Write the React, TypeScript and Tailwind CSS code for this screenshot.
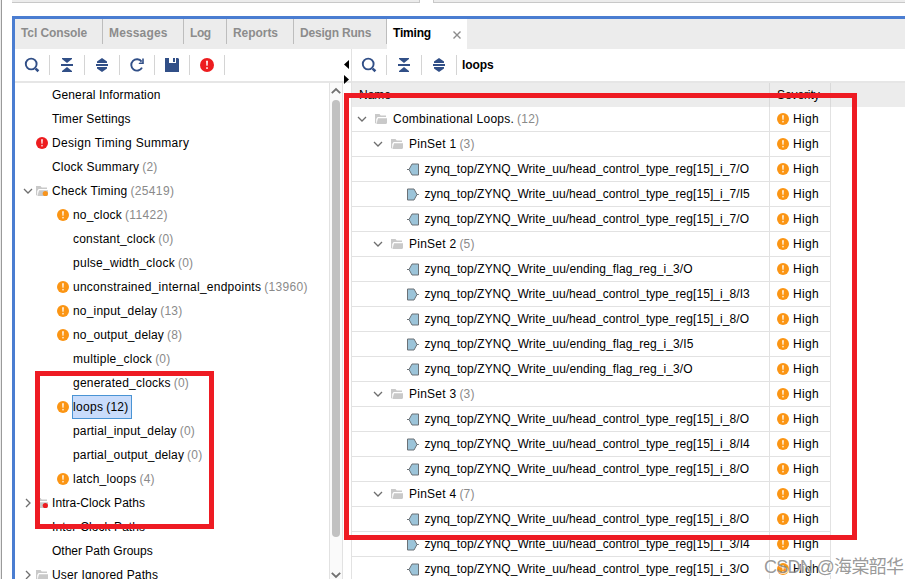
import clsx from 'clsx';

type Status = 'error' | 'warning';
type Folder = 'plain' | 'orange' | 'red';

interface TreeItem {
  name: string;
  count?: string;
  child?: boolean;
  status?: Status;
  folder?: Folder;
  arrow?: 'open' | 'closed';
  selected?: boolean;
  tracking: string;
}

interface LoopRow {
  name: string;
  count?: string;
  kind: 'root' | 'set' | 'out' | 'in';
}

const tabs = [
  { name: 'Tcl Console', style: 'w-[88px] tracking-[-0.1px]' },
  { name: 'Messages', style: 'w-[81px] tracking-[0.15px]' },
  { name: 'Log', style: 'w-[43px] tracking-[-0.4px]' },
  { name: 'Reports', style: 'w-[67px] tracking-[-0.05px]' },
  { name: 'Design Runs', style: 'w-[93px] tracking-[-0.2px]' },
];

const treeItems: TreeItem[] = [
  { name: 'General Information', tracking: 'tracking-[0.13px]' },
  { name: 'Timer Settings', tracking: 'tracking-[0.13px]' },
  { name: 'Design Timing Summary', status: 'error', tracking: 'tracking-[0.31px]' },
  { name: 'Clock Summary', count: '(2)', tracking: 'tracking-[0.2px]' },
  { name: 'Check Timing', count: '(25419)', folder: 'orange', arrow: 'open', tracking: 'tracking-[0.23px]' },
  { name: 'no_clock', count: '(11422)', child: true, status: 'warning', tracking: 'tracking-[0.2px]' },
  { name: 'constant_clock', count: '(0)', child: true, tracking: 'tracking-[0.2px]' },
  { name: 'pulse_width_clock', count: '(0)', child: true, tracking: 'tracking-[0.27px]' },
  { name: 'unconstrained_internal_endpoints', count: '(13960)', child: true, status: 'warning', tracking: 'tracking-[0.25px]' },
  { name: 'no_input_delay', count: '(13)', child: true, status: 'warning', tracking: 'tracking-[0.2px]' },
  { name: 'no_output_delay', count: '(8)', child: true, status: 'warning', tracking: 'tracking-[0.15px]' },
  { name: 'multiple_clock', count: '(0)', child: true, tracking: 'tracking-[0.27px]' },
  { name: 'generated_clocks', count: '(0)', child: true, tracking: 'tracking-[0.23px]' },
  { name: 'loops', count: '(12)', child: true, status: 'warning', selected: true, tracking: 'tracking-[0.3px]' },
  { name: 'partial_input_delay', count: '(0)', child: true, tracking: 'tracking-[0.16px]' },
  { name: 'partial_output_delay', count: '(0)', child: true, tracking: 'tracking-[0.15px]' },
  { name: 'latch_loops', count: '(4)', child: true, status: 'warning', tracking: 'tracking-[0.25px]' },
  { name: 'Intra-Clock Paths', folder: 'red', arrow: 'closed', tracking: 'tracking-[0.06px]' },
  { name: 'Inter-Clock Paths', tracking: 'tracking-[0.06px]' },
  { name: 'Other Path Groups', tracking: 'tracking-normal' },
  { name: 'User Ignored Paths', folder: 'plain', arrow: 'closed', tracking: 'tracking-[0.15px]' },
];

const headPin = 'zynq_top/ZYNQ_Write_uu/head_control_type_reg[15]_i_';
const endPin = 'zynq_top/ZYNQ_Write_uu/ending_flag_reg_i_';

const loopRows: LoopRow[] = [
  { name: 'Combinational Loops.', count: '(12)', kind: 'root' },
  { name: 'PinSet 1', count: '(3)', kind: 'set' },
  { name: `${headPin}7/O`, kind: 'out' },
  { name: `${headPin}7/I5`, kind: 'in' },
  { name: `${headPin}7/O`, kind: 'out' },
  { name: 'PinSet 2', count: '(5)', kind: 'set' },
  { name: `${endPin}3/O`, kind: 'out' },
  { name: `${headPin}8/I3`, kind: 'in' },
  { name: `${headPin}8/O`, kind: 'out' },
  { name: `${endPin}3/I5`, kind: 'in' },
  { name: `${endPin}3/O`, kind: 'out' },
  { name: 'PinSet 3', count: '(3)', kind: 'set' },
  { name: `${headPin}8/O`, kind: 'out' },
  { name: `${headPin}8/I4`, kind: 'in' },
  { name: `${headPin}8/O`, kind: 'out' },
  { name: 'PinSet 4', count: '(7)', kind: 'set' },
  { name: `${headPin}8/O`, kind: 'out' },
  { name: `${headPin}3/I4`, kind: 'in' },
  { name: `${headPin}3/O`, kind: 'out' },
];

function StatusIcon({ status, size = 12 }: { status: Status; size?: number }) {
  const fill = status === 'error' ? '#ed1c1f' : '#fb9514';
  return (
    <svg width={size} height={size} viewBox="0 0 12 12" className="shrink-0">
      <circle cx="6" cy="6" r="6" fill={fill} />
      <path d="M5.1 2.3h1.8l-.3 4.4H5.4z" fill="#fff" fillOpacity="0.9" />
      <rect x="5.3" y="7.9" width="1.4" height="1.5" fill="#fff" fillOpacity="0.9" />
    </svg>
  );
}

function FolderIcon({ kind = 'plain' }: { kind?: Folder }) {
  return (
    <svg width="12" height="12" viewBox="0 0 12 12" className="shrink-0" fill="#c9c9c9">
      <path d="M0 1h4.5l1.2 1.4H11V4H2.6L1.2 6v4L0 10.6z" />
      <path d="M3 5.2h9V10l-.8 1H1.4z" />
      {kind !== 'plain' && <circle cx="9.3" cy="8.5" r="2.6" fill={kind === 'red' ? '#ed1c1f' : '#f7941d'} />}
    </svg>
  );
}

function Chevron({ open }: { open: boolean }) {
  return (
    <svg width="10" height="10" viewBox="0 0 10 10" className="shrink-0" fill="none" stroke="#6e6e6e" strokeWidth="1.3">
      {open ? <path d="M1 3l4 4 4-4" /> : <path d="M3 1l4 4-4 4" />}
    </svg>
  );
}

function PinIcon({ input }: { input: boolean }) {
  return (
    <svg width="13" height="13" viewBox="0 0 13 13" className="shrink-0">
      {input ? (
        <path d="M1.5 1H8l3 5.5L8 12H1.5zM11 6.5h1.8" fill="#9cc4d9" stroke="#6b7176" />
      ) : (
        <path d="M12.5 1H6L3 6.5 6 12h6.5zM3 6.5H1" fill="#9cc4d9" stroke="#6b7176" />
      )}
    </svg>
  );
}

function SearchIcon() {
  return (
    <svg width="16" height="16" viewBox="0 0 16 16" fill="none" stroke="#314f87" strokeWidth="1.9">
      <circle cx="7.2" cy="7" r="5.4" />
      <path d="M11.6 11.6l2.8 2.6" strokeWidth="2.6" />
    </svg>
  );
}

function CollapseIcon() {
  return (
    <svg width="14" height="14" viewBox="0 0 14 14" fill="#314f87">
      <path d="M2 0h10v1L7 5 2 1z" />
      <rect x="1" y="6" width="12" height="2" />
      <path d="M7 9l5 4v1H2v-1z" />
    </svg>
  );
}

function ExpandIcon() {
  return (
    <svg width="14" height="14" viewBox="0 0 14 14" fill="#314f87">
      <path d="M7 0l5 3.6V5H2V3.6z" />
      <rect x="1" y="6" width="12" height="2" />
      <path d="M2 9h10v1.4L7 14l-5-3.6z" />
    </svg>
  );
}

function RefreshIcon() {
  return (
    <svg width="16" height="16" viewBox="0 0 16 16">
      <path d="M12.6 4.6A5.7 5.7 0 1 0 13 10.6" fill="none" stroke="#314f87" strokeWidth="1.9" />
      <path d="M14.8 1.6V7H9.4l1.2-1.5h2.6V1.6z" fill="#314f87" />
    </svg>
  );
}

function SaveIcon() {
  return (
    <svg width="14" height="14" viewBox="0 0 14 14" fill="#314f87">
      <path d="M0 0h4v5h7V0h2l1 1v13H0z" />
      <rect x="8" y="0" width="2" height="4" />
    </svg>
  );
}

function ToolCell({ children }: { children: React.ReactNode }) {
  return (
    <div className="flex h-5 w-[35px] shrink-0 items-center justify-center border-r border-[#d4d4d4]">{children}</div>
  );
}

function TreeRow({ item }: { item: TreeItem }) {
  return (
    <div className="flex h-6 shrink-0 items-center whitespace-nowrap">
      <div className={clsx('flex shrink-0 items-center justify-end pr-1', item.child ? 'w-[58px]' : 'w-[37px]')}>
        {item.arrow && <Chevron open={item.arrow === 'open'} />}
        {item.folder && (
          <span className="ml-[3px]">
            <FolderIcon kind={item.folder} />
          </span>
        )}
        {item.status && <StatusIcon status={item.status} />}
      </div>
      <div
        className={clsx(
          'flex items-center gap-[3px]',
          item.selected && '-ml-px h-6 w-[60px] border border-[#4a94d4] bg-[#c9dcfb]',
        )}
      >
        <span className={item.tracking}>{item.name}</span>
        {item.count && (
          <span
            className={clsx(
              item.count.length > 4 ? 'tracking-[0.35px]' : 'tracking-[0.2px]',
              !item.selected && 'text-[#8a8a8a]',
            )}
          >
            {item.count}
          </span>
        )}
      </div>
    </div>
  );
}

function LoopTableRow({ row }: { row: LoopRow }) {
  const isPin = row.kind === 'in' || row.kind === 'out';
  return (
    <div className="flex h-[25px] w-[479px] shrink-0">
      <div
        className={clsx(
          'flex w-[418px] items-center whitespace-nowrap border-b border-r border-[#e2e2e2]',
          row.kind === 'root' && 'pl-[5px]',
          row.kind === 'set' && 'pl-[21px]',
          isPin && 'pl-[54px]',
        )}
      >
        {isPin ? (
          <>
            <PinIcon input={row.kind === 'in'} />
            <span className={clsx('ml-[5.5px]', row.name.startsWith(endPin) ? 'tracking-[0.08px]' : 'tracking-[0.06px]')}>
              {row.name}
            </span>
          </>
        ) : (
          <>
            <Chevron open />
            <span className="ml-2 mr-[6px]">
              <FolderIcon />
            </span>
            <span className="tracking-[0.25px]">{row.name}</span>
            <span className="ml-[3px] tracking-[0.2px] text-[#8a8a8a]">{row.count}</span>
          </>
        )}
      </div>
      <div className="flex w-[61px] items-center gap-1 border-b border-r border-[#e2e2e2] pl-[7px]">
        <StatusIcon status="warning" />
        <span className="tracking-[0.3px]">High</span>
      </div>
    </div>
  );
}

export default function App() {
  return (
    <div className="h-[585px] w-[916px] overflow-hidden bg-white">
      <div className="relative flex h-[579px] w-[905px] overflow-hidden font-['Liberation_Sans',Arial,sans-serif] text-[12px] leading-[14px] text-black">
        <div className="w-[2px] shrink-0 border-r border-[#9a9a9a] bg-[#ececec]" />

        <div className="ml-[10px] flex min-w-0 flex-1 flex-col">
          {/* Bottom edges of the panels above */}
          <div className="mb-[13px] flex h-[3px] shrink-0 gap-[13px]">
            <div className="w-[408px] border-b border-r border-[#c8c8c8] bg-[#ececec]" />
            <div className="flex-1 border-b border-l border-[#c8c8c8] bg-[#ececec]" />
          </div>

          <div className="flex min-h-0 flex-1 flex-col border-l-[3px] border-t-[3px] border-[#4a7dd1]">
            {/* Tabs */}
            <div className="flex h-[30px] shrink-0 bg-[#ececec] font-bold text-[#8c8c8c]">
              {tabs.map((tab) => (
                <div
                  key={tab.name}
                  className={clsx('h-[25px] whitespace-nowrap border-r border-[#bdbdbd] pl-[6px] pt-[7px]', tab.style)}
                >
                  {tab.name}
                </div>
              ))}
              <div className="flex w-20 justify-between bg-white px-[6px] pt-[7px] text-black">
                <span className="tracking-[-0.2px]">Timing</span>
                <svg width="8" height="8" viewBox="0 0 8 8" className="mt-[5px]" stroke="#8c8c8c" strokeWidth="1.4">
                  <path d="M.5.5l7 7M7.5.5l-7 7" />
                </svg>
              </div>
            </div>

            <div className="flex min-h-0 flex-1">
              {/* Report tree */}
              <div className="flex w-[328px] shrink-0 flex-col">
                <div className="flex h-[34px] shrink-0 items-center border-b-2 border-[#e6e6e6]">
                  <ToolCell><SearchIcon /></ToolCell>
                  <ToolCell><CollapseIcon /></ToolCell>
                  <ToolCell><ExpandIcon /></ToolCell>
                  <ToolCell><RefreshIcon /></ToolCell>
                  <ToolCell><SaveIcon /></ToolCell>
                  <ToolCell><StatusIcon status="error" size={14} /></ToolCell>
                </div>
                <div className="flex min-h-0 flex-1">
                  <div className="flex min-w-0 flex-1 flex-col overflow-hidden">
                    {treeItems.map((item) => (
                      <TreeRow key={item.name} item={item} />
                    ))}
                  </div>
                  <div className="flex w-[14px] flex-col items-center border-x border-[#e2e2e2] bg-[#fafafa]">
                    <svg width="10" height="17" viewBox="0 0 10 17" fill="none" stroke="#707070" strokeWidth="1.8">
                      <path d="M.8 10.2L5 6l4.2 4.2" />
                    </svg>
                    <div className="h-[437px] w-2 rounded-full bg-[#c1c1c1]" />
                    <svg width="10" height="42" viewBox="0 0 10 42" fill="none" stroke="#707070" strokeWidth="1.8">
                      <path d="M.8 35.8L5 40l4.2-4.2" />
                    </svg>
                  </div>
                </div>
              </div>

              {/* Splitter */}
              <div className="flex w-2 shrink-0 flex-col items-start">
                <div className="h-[34px] w-full border-b-2 border-[#e6e6e6]">
                  <svg width="8" height="36" viewBox="0 0 8 36" className="overflow-visible">
                    <path d="M6 11v9l-5-4.5zM1 26v9l5-4.5z" />
                  </svg>
                </div>
              </div>

              {/* Loops table */}
              <div className="flex min-w-0 flex-1 flex-col border-l border-[#e2e2e2]">
                <div className="flex h-[34px] shrink-0 items-center border-b-2 border-[#e6e6e6]">
                  <ToolCell><SearchIcon /></ToolCell>
                  <ToolCell><CollapseIcon /></ToolCell>
                  <ToolCell><ExpandIcon /></ToolCell>
                  <span className="ml-[5px] font-bold tracking-[-0.1px]">loops</span>
                </div>
                <div className="flex h-6 shrink-0 items-center bg-[#ececec]">
                  <div className="flex h-full w-[418px] items-center border-r border-[#d9d9d9] pl-[7px]">Name</div>
                  <div className="flex h-full w-[61px] items-center border-r border-[#d9d9d9] pl-[7px] tracking-[-0.1px]">Severity</div>
                </div>
                <div className="flex min-h-0 flex-1 flex-col overflow-hidden">
                  {loopRows.map((row, index) => (
                    <LoopTableRow key={index} row={row} />
                  ))}
                </div>
              </div>
            </div>
          </div>
        </div>

        {/* Highlight boxes */}
        <div className="absolute left-[35px] top-[371px] h-[158px] w-[179px] border-[5px] border-[#ee1b23]" />
        <div className="absolute left-[344px] top-[93px] h-[447px] w-[513px] border-[5px] border-[#ee1b23]" />

        <div className="absolute left-[764px] top-[556px] whitespace-nowrap font-['Liberation_Sans','Noto_Sans_CJK_SC',sans-serif] text-[18px] leading-[22px] tracking-[-0.7px] text-[#808080]/80 [text-shadow:1px_1px_0_rgba(255,255,255,0.7)]">
          CSDN @海棠韶华
        </div>
      </div>
    </div>
  );
}
